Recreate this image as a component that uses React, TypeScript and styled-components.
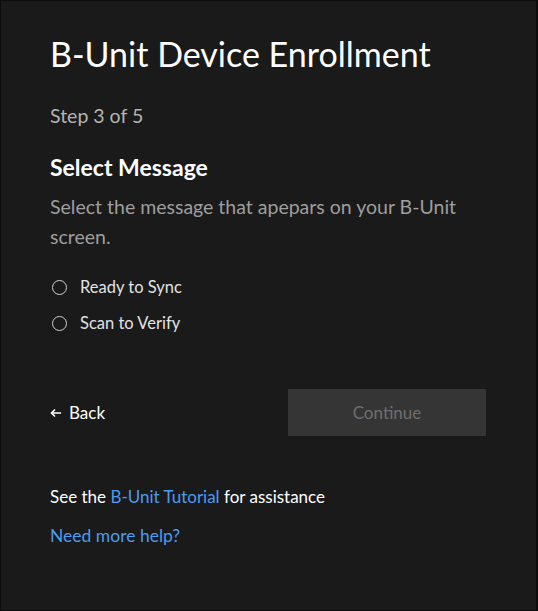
import React, { FC, useState } from "react";
import styled, { createGlobalStyle } from "styled-components";

const GlobalStyle = createGlobalStyle`
  html, body {
    margin: 0;
    padding: 0;
    background: #0f0f0f;
  }
  body {
    font-family: Lato, "Noto Sans", sans-serif;
  }
`;

const Card = styled.div`
  box-sizing: border-box;
  width: 538px;
  height: 611px;
  background: #1a1a1a;
  border: 1px solid #0c0c0c;
  border-right-width: 2px;
  padding: 31px 50px 0 49px;
  display: flex;
  flex-direction: column;
  color: #ffffff;
`;

const Title = styled.h1`
  margin: 0;
  font-size: 34px;
  font-weight: 400;
  line-height: 44px;
  color: #ffffff;
`;

const Step = styled.div`
  margin-top: 27px;
  font-size: 19.5px;
  line-height: 26px;
  color: #b4b4b4;
`;

const Heading = styled.h2`
  margin: 24px 0 0 0;
  font-size: 23px;
  font-weight: 700;
  line-height: 28px;
  color: #ffffff;
`;

const Description = styled.p`
  margin: 11px 0 0 0;
  font-size: 19.5px;
  line-height: 30px;
  color: #9e9e9e;
`;

const RadioGroup = styled.div`
  margin-top: 23px;
  display: flex;
  flex-direction: column;
  gap: 11px;
`;

const RadioLabel = styled.label`
  display: flex;
  align-items: center;
  gap: 13px;
  font-size: 16.5px;
  line-height: 25px;
  color: #e2e2e2;
  cursor: pointer;
`;

const RadioCircle = styled.span<{ checked: boolean }>`
  box-sizing: border-box;
  width: 15px;
  height: 15px;
  margin-left: 2px;
  border-radius: 50%;
  border: 1.5px solid #d0d0d0;
  background: ${(p) => (p.checked ? "#4c9bf0" : "transparent")};
`;

const Actions = styled.div`
  margin-top: 53px;
  display: flex;
  align-items: center;
  justify-content: space-between;
`;

const BackButton = styled.button`
  background: none;
  border: none;
  padding: 0;
  display: flex;
  align-items: center;
  gap: 7px;
  font-family: inherit;
  font-size: 17px;
  color: #ffffff;
  cursor: pointer;
`;

const ContinueButton = styled.button`
  width: 198px;
  height: 47px;
  background: #353535;
  border: none;
  font-family: inherit;
  font-size: 17px;
  color: #6e6e6e;
`;

const Help = styled.div`
  margin-top: 49px;
  display: flex;
  flex-direction: column;
  gap: 16px;
  font-size: 17px;
  line-height: 23px;
  color: #ffffff;
`;

const Link = styled.a`
  color: #4c9bf0;
  text-decoration: none;
`;

const HelpLink = styled(Link)`
  font-size: 17.5px;
`;

const ArrowLeft: FC = () => (
  <svg width="12" height="10" viewBox="0 0 12 10" fill="none">
    <path d="M11 5H2M5 1.5L1.5 5L5 8.5" stroke="#ffffff" strokeWidth="1.6" />
  </svg>
);

const options = ["Ready to Sync", "Scan to Verify"];

const App: FC = () => {
  const [selected, setSelected] = useState<string | null>(null);

  return (
    <>
      <GlobalStyle />
      <Card>
        <Title>B-Unit Device Enrollment</Title>
        <Step>Step 3 of 5</Step>
        <Heading>Select Message</Heading>
        <Description>
          Select the message that apepars on your B-Unit screen.
        </Description>
        <RadioGroup>
          {options.map((o) => (
            <RadioLabel key={o} onClick={() => setSelected(o)}>
              <RadioCircle checked={selected === o} />
              {o}
            </RadioLabel>
          ))}
        </RadioGroup>
        <Actions>
          <BackButton>
            <ArrowLeft />
            Back
          </BackButton>
          <ContinueButton disabled={!selected}>Continue</ContinueButton>
        </Actions>
        <Help>
          <div>
            See the <Link href="#">B-Unit Tutorial</Link> for assistance
          </div>
          <HelpLink href="#">Need more help?</HelpLink>
        </Help>
      </Card>
    </>
  );
};

export default App;
